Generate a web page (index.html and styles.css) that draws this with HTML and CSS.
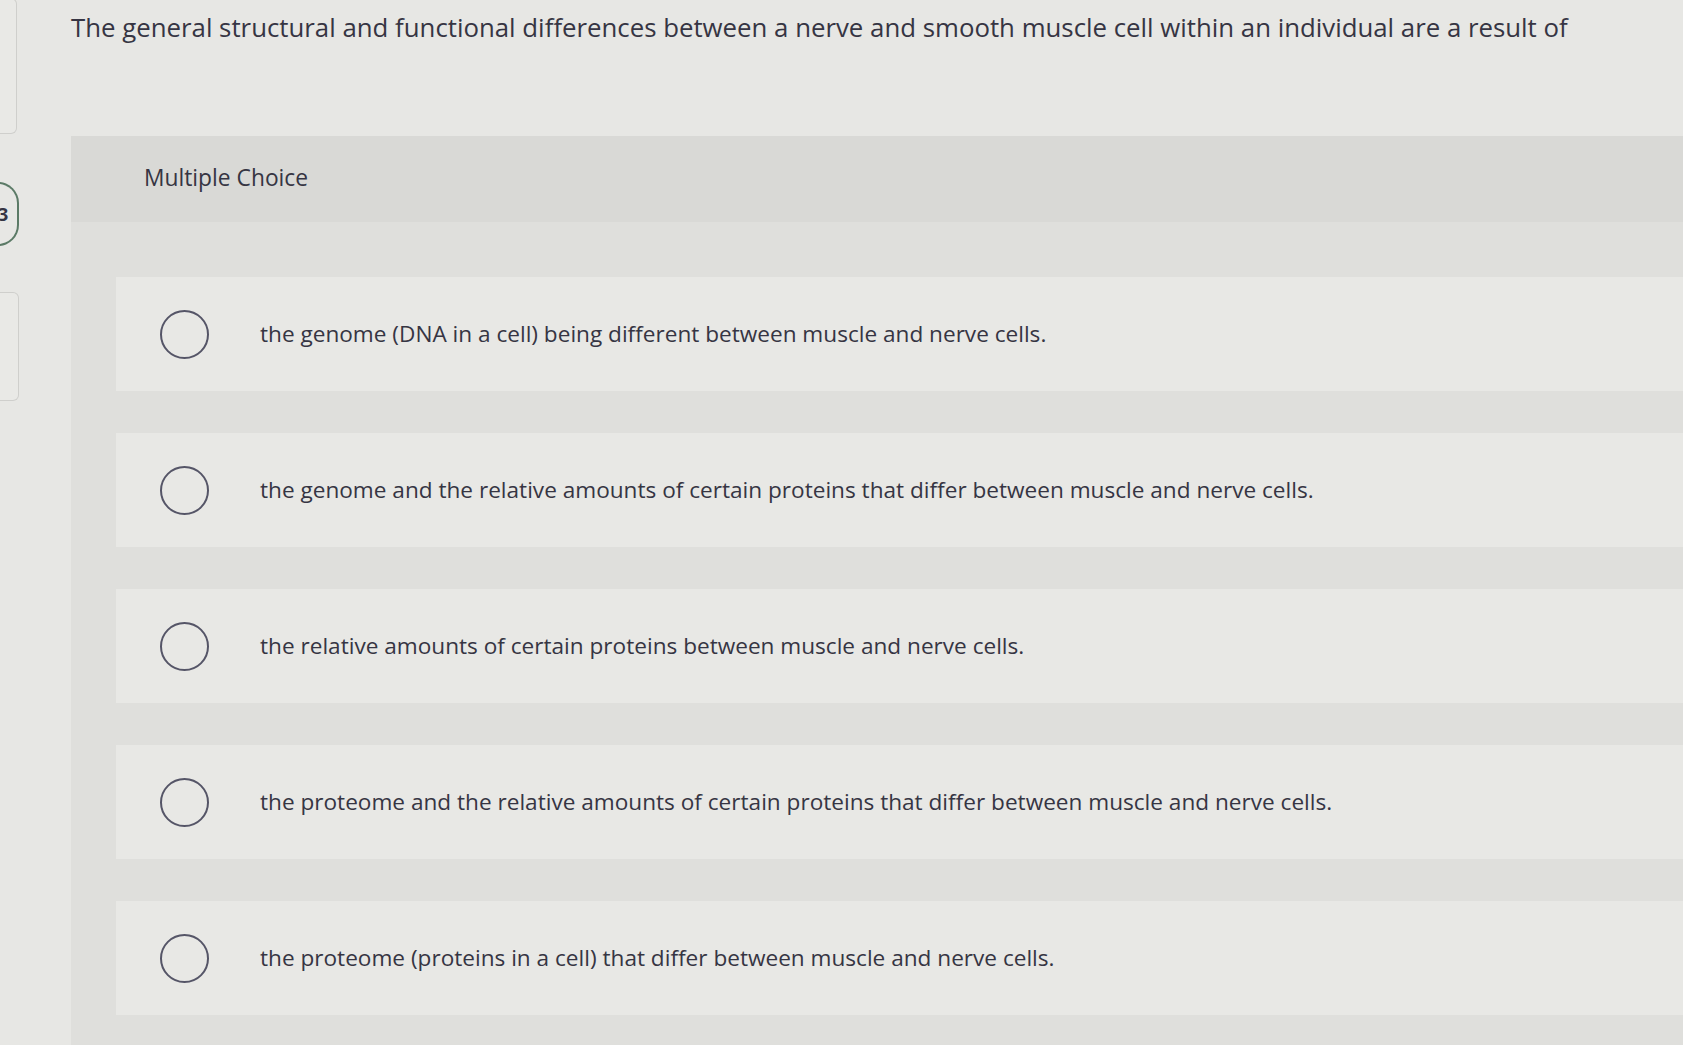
FILE: index.html
```html
<!DOCTYPE html>
<html>
<head>
<meta charset="utf-8">
<link rel="stylesheet" href="styles.css">
</head>
<body>
<div class="page">
  <aside class="rail">
    <div class="rail-box rail-top"></div>
    <div class="rail-badge"><span>3</span></div>
    <div class="rail-box rail-mid"></div>
  </aside>
  <main class="main">
    <h1 class="question">The general structural and functional differences between a nerve and smooth muscle cell within an individual are a result of</h1>
    <section class="panel">
      <div class="panel-head">Multiple Choice</div>
      <div class="options">
        <label class="option"><span class="radio"></span><span class="opt-text">the genome (DNA in a cell) being different between muscle and nerve cells.</span></label>
        <label class="option"><span class="radio"></span><span class="opt-text">the genome and the relative amounts of certain proteins that differ between muscle and nerve cells.</span></label>
        <label class="option"><span class="radio"></span><span class="opt-text">the relative amounts of certain proteins between muscle and nerve cells.</span></label>
        <label class="option"><span class="radio"></span><span class="opt-text">the proteome and the relative amounts of certain proteins that differ between muscle and nerve cells.</span></label>
        <label class="option"><span class="radio"></span><span class="opt-text">the proteome (proteins in a cell) that differ between muscle and nerve cells.</span></label>
      </div>
    </section>
  </main>
</div>
</body>
</html>
```
FILE: styles.css
```css
html, body {
  margin: 0;
  padding: 0;
  height: 100%;
  overflow: hidden;
}
body {
  background: #e7e7e4;
  font-family: "Open Sans", "Liberation Sans", sans-serif;
  color: #363543;
}
.page {
  display: flex;
  min-height: 1045px;
}
.rail {
  width: 71px;
  flex: none;
  display: flex;
  flex-direction: column;
}
.rail-box {
  width: 18px;
  margin-left: -2px;
  border: 1px solid #cfcfcc;
  border-left: none;
  border-radius: 0 6px 6px 0;
  background: #e9e9e6;
}
.rail-top {
  height: 134px;
  margin-top: -2px;
}
.rail-badge {
  margin-top: 48px;
  width: 19px;
  height: 60px;
  border: 2px solid #5b7a66;
  border-left: none;
  border-radius: 0 30px 30px 0;
  margin-left: -2px;
  display: flex;
  align-items: center;
  overflow: hidden;
}
.rail-badge span {
  font-size: 18px;
  font-weight: 700;
  color: #363543;
  margin-left: 0;
}
.rail-mid {
  margin-top: 46px;
  width: 20px;
  height: 107px;
}
.main {
  flex: 1;
  display: flex;
  flex-direction: column;
}
.question {
  margin: 0;
  height: 136px;
  box-sizing: border-box;
  padding-top: 10px;
  font-size: 25.8px;
  font-weight: 400;
  line-height: 34px;
  white-space: nowrap;
}
.panel {
  flex: 1;
  background: #dfdfdc;
}
.panel-head {
  height: 86px;
  box-sizing: border-box;
  padding-left: 73px;
  padding-top: 27px;
  font-size: 22.8px;
  line-height: 30px;
  background: #d9d9d6;
}
.options {
  padding: 55px 0 0 45px;
  display: flex;
  flex-direction: column;
  gap: 42px;
}
.option {
  height: 114px;
  background: #e8e8e5;
  display: flex;
  align-items: center;
  padding-left: 44px;
}
.radio {
  width: 45px;
  height: 45px;
  flex: none;
  border: 2.5px solid #555567;
  border-radius: 50%;
}
.opt-text {
  margin-left: 51px;
  font-size: 22.6px;
  line-height: 30px;
  white-space: nowrap;
}
```
